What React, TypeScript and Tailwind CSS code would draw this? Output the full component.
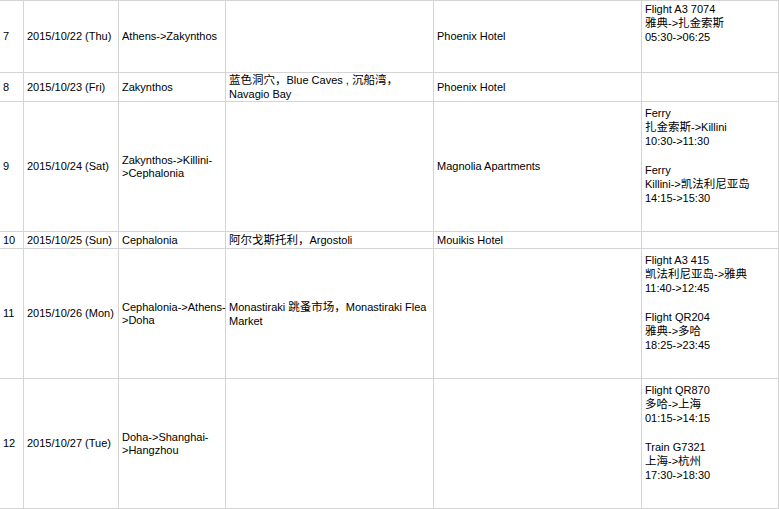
import React from "react";

type Row = {
    n: string;
    date: string;
    route: string[];
    desc?: string[];
    hotel?: string;
    transport?: string[][];
    h: string;
};

const rows: Row[] = [
    {
        n: "7",
        date: "2015/10/22 (Thu)",
        route: ["Athens->Zakynthos"],
        hotel: "Phoenix Hotel",
        transport: [["Flight A3 7074", "雅典->扎金索斯", "05:30->06:25"]],
        h: "h-[72px]",
    },
    {
        n: "8",
        date: "2015/10/23 (Fri)",
        route: ["Zakynthos"],
        desc: ["蓝色洞穴，Blue Caves , 沉船湾，", "Navagio Bay"],
        hotel: "Phoenix Hotel",
        h: "h-[29px]",
    },
    {
        n: "9",
        date: "2015/10/24 (Sat)",
        route: ["Zakynthos->Killini-", ">Cephalonia"],
        hotel: "Magnolia Apartments",
        transport: [
            ["Ferry", "扎金索斯->Killini", "10:30->11:30"],
            ["Ferry", "Killini->凯法利尼亚岛", "14:15->15:30"],
        ],
        h: "h-[130px]",
    },
    {
        n: "10",
        date: "2015/10/25 (Sun)",
        route: ["Cephalonia"],
        desc: ["阿尔戈斯托利，Argostoli"],
        hotel: "Mouikis Hotel",
        h: "h-[17px]",
    },
    {
        n: "11",
        date: "2015/10/26 (Mon)",
        route: ["Cephalonia->Athens-", ">Doha"],
        desc: ["Monastiraki 跳蚤市场，Monastiraki Flea", "Market"],
        transport: [
            ["Flight A3 415", "凯法利尼亚岛->雅典", "11:40->12:45"],
            ["Flight QR204", "雅典->多哈", "18:25->23:45"],
        ],
        h: "h-[130px]",
    },
    {
        n: "12",
        date: "2015/10/27 (Tue)",
        route: ["Doha->Shanghai-", ">Hangzhou"],
        transport: [
            ["Flight QR870", "多哈->上海", "01:15->14:15"],
            ["Train G7321", "上海->杭州", "17:30->18:30"],
        ],
        h: "h-[130px]",
    },
];

// wrap the chinese runs so they come out a bit larger, like the sheet does
const Mixed = ({ text }: { text: string }) => {
    const parts = text.split(/([\u3000-\u9fff\uff00-\uffef]+)/);
    return (
        <>
            {parts.map((p, i) =>
                /[\u3000-\u9fff\uff00-\uffef]/.test(p) ? (
                    <span key={i} className="text-[11.5px] leading-none font-['Noto_Sans_CJK_SC',sans-serif]">
                        {p}
                    </span>
                ) : (
                    <span key={i}>{p}</span>
                )
            )}
        </>
    );
};

const cell = "border-r border-[#d4d4d4] px-[3px] flex";

const App = () => {
    return (
        <div className="w-[779px] h-[509px] bg-white text-black text-[11px] font-['Liberation_Sans','Noto_Sans_CJK_SC',sans-serif] border-t border-[#d4d4d4]">
            {rows.map((r, idx) => (
                <div key={r.n} className={`flex border-b border-[#d4d4d4] ${r.h}`}>
                    <div className={`${cell} w-[24px] items-center`}>{r.n}</div>
                    <div className={`${cell} w-[95px] items-center whitespace-nowrap`}>{r.date}</div>
                    <div className={`${cell} w-[107px] items-center`}>
                        <div className="leading-[13px]">
                            {r.route.map((l) => (
                                <div key={l} className="whitespace-nowrap">{l}</div>
                            ))}
                        </div>
                    </div>
                    <div className={`${cell} w-[208px] items-center`}>
                        <div className="leading-[14px]">
                            {r.desc?.map((l) => (
                                <div key={l} className="whitespace-nowrap h-[14px]">
                                    <Mixed text={l} />
                                </div>
                            ))}
                        </div>
                    </div>
                    <div className={`${cell} w-[208px] items-center whitespace-nowrap`}>{r.hotel}</div>
                    <div className={`${cell} w-[137px] items-start ${idx === 0 ? "pt-[1px]" : "pt-[4px]"}`}>
                        <div className="flex flex-col gap-[15px] leading-[14px]">
                            {r.transport?.map((g, gi) => (
                                <div key={gi}>
                                    {g.map((l) => (
                                        <div key={l} className="whitespace-nowrap h-[14px]">
                                            <Mixed text={l} />
                                        </div>
                                    ))}
                                </div>
                            ))}
                        </div>
                    </div>
                </div>
            ))}
        </div>
    );
};

export default App;
